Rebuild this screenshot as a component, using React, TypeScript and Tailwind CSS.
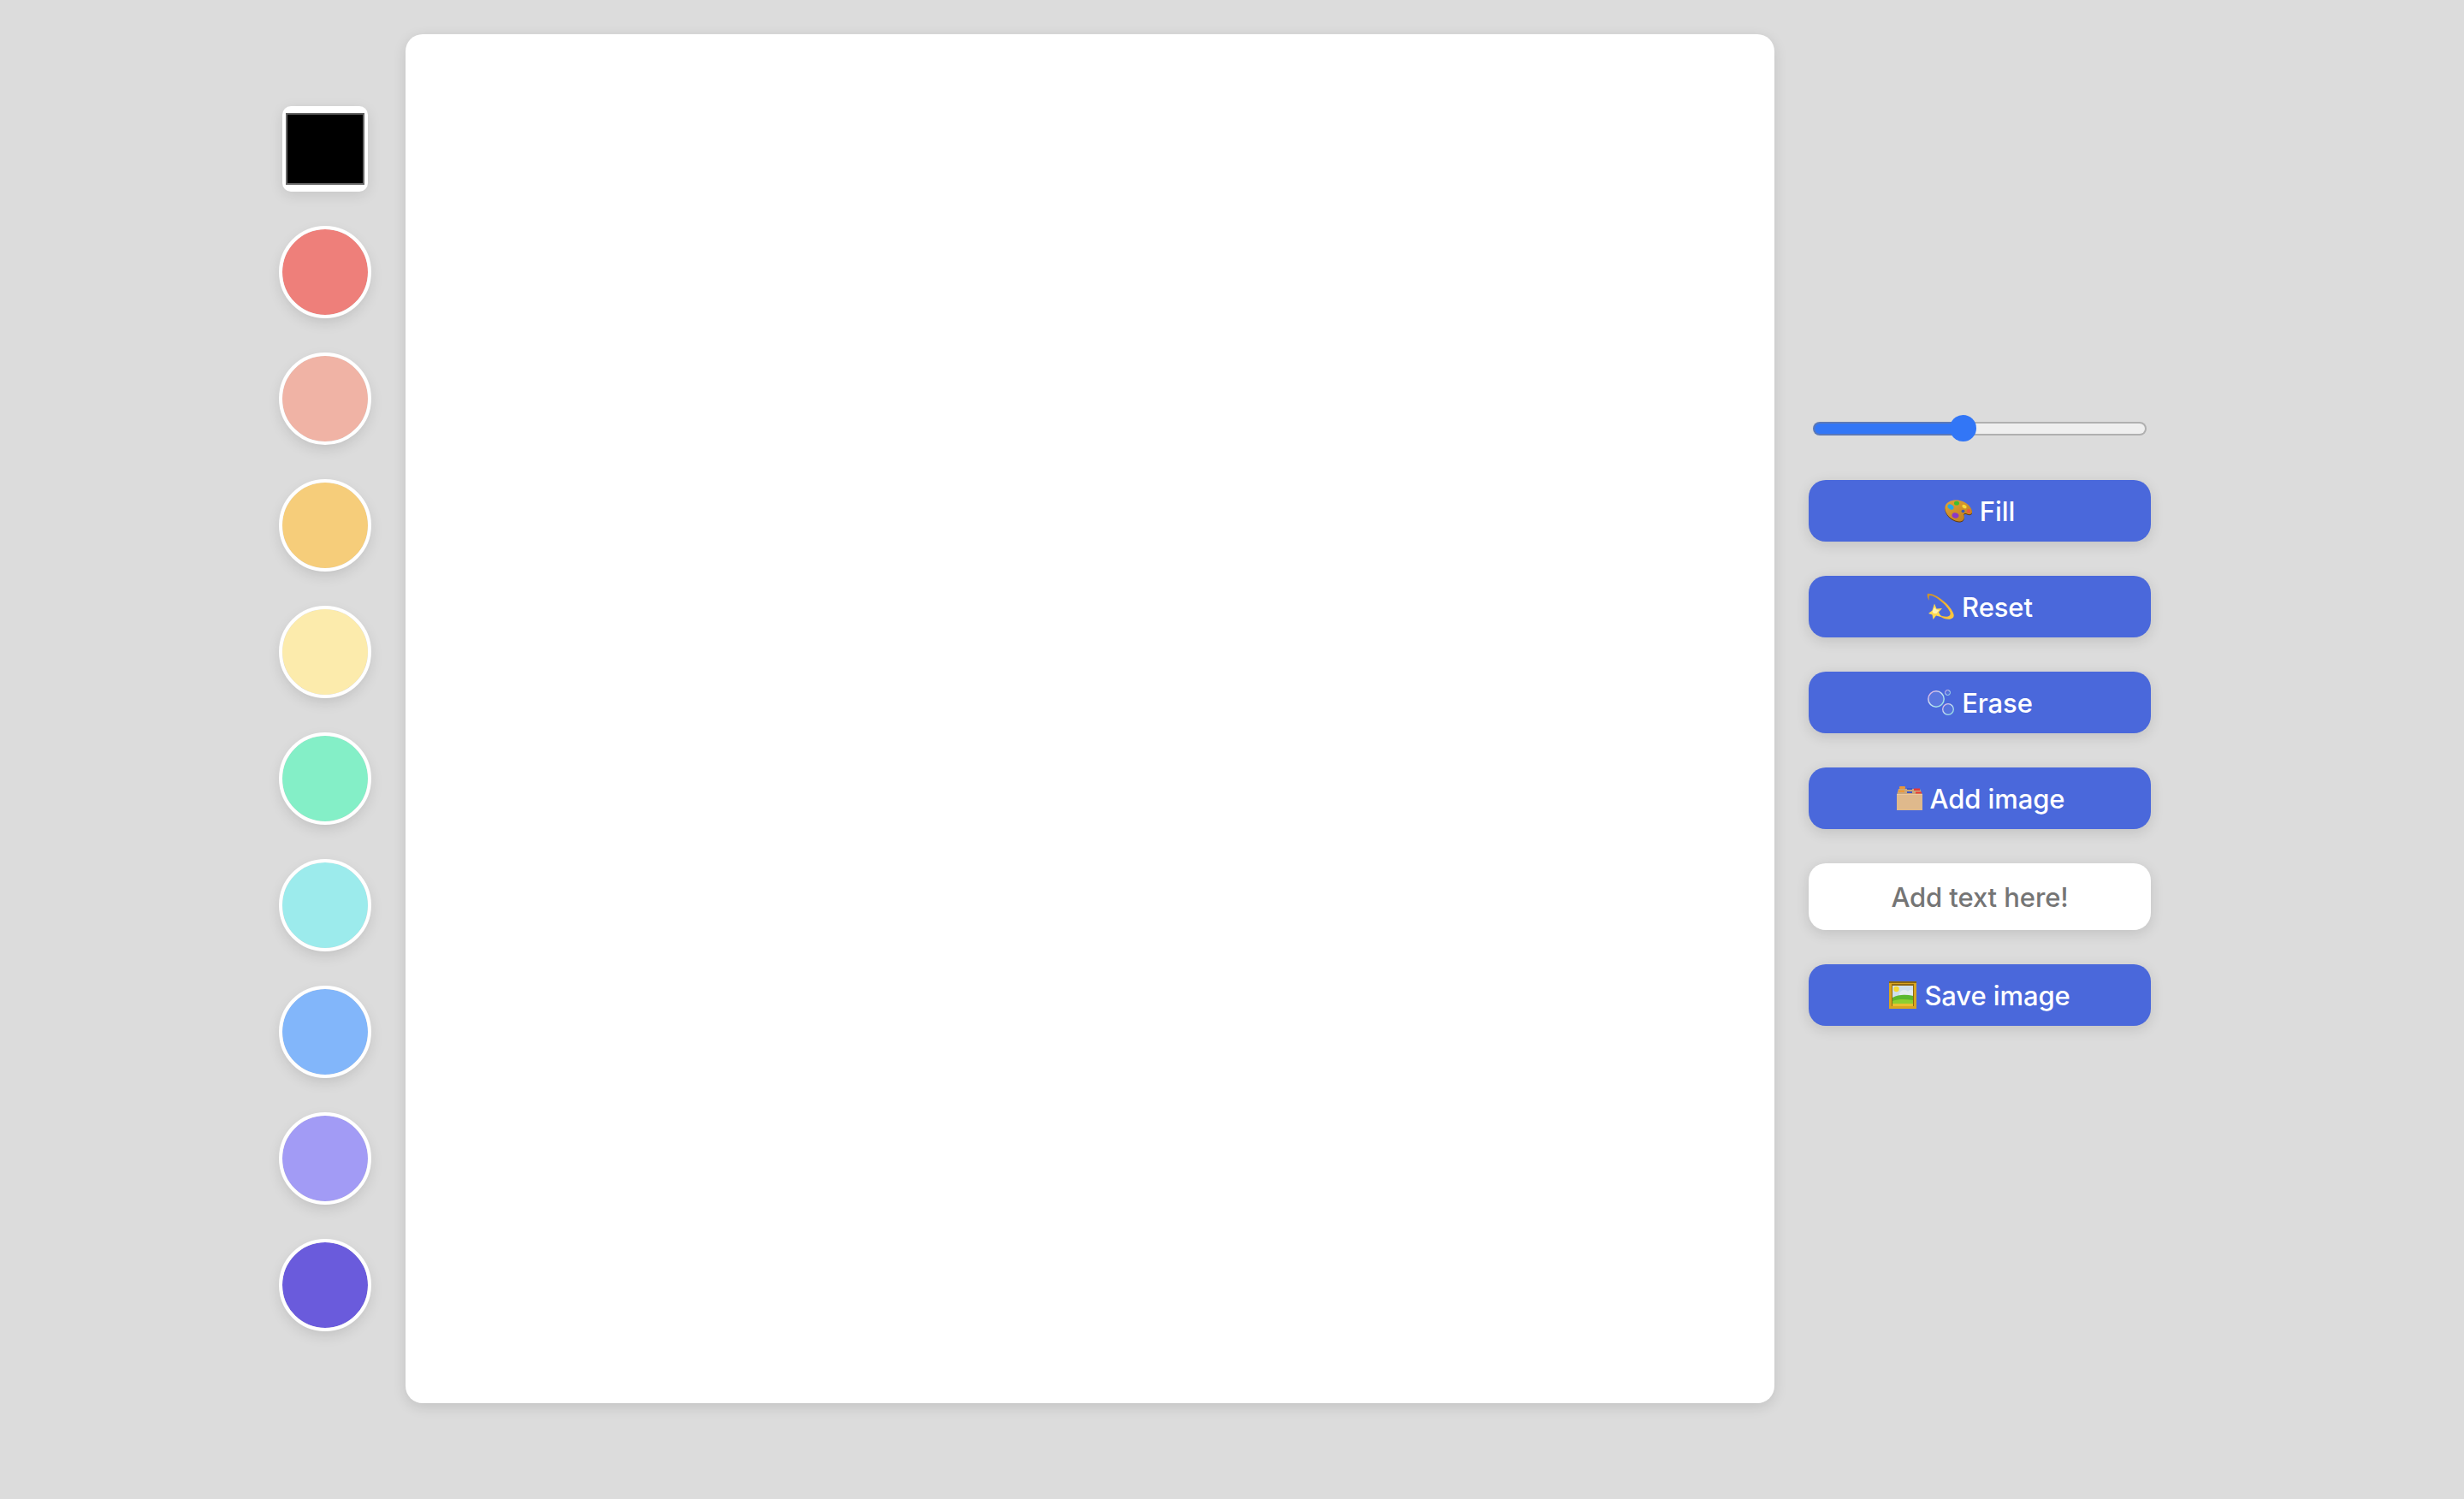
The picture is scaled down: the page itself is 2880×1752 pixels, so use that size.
import React from "react";

const colors = ["#ee7f7a", "#f0b3a5", "#f6cd7a", "#fcebac", "#84efc7", "#9cebec", "#82b6fa", "#a29bf5", "#6a5bdc"];

const Palette = () => (
  <svg viewBox="0 0 32 32" className="w-[32px] h-[32px] block">
    <defs>
      <linearGradient id="pal" x1="0" y1="0" x2="0.7" y2="1">
        <stop offset="0" stopColor="#e3a535" />
        <stop offset="1" stopColor="#bf7f22" />
      </linearGradient>
    </defs>
    <path d="M0.5 11 C2 5 10 2.5 17.5 4 C25 5.5 31.5 11 32 17 C32.3 20 29 21 26 19.5 C23.5 18.5 21.5 19.5 22.5 22 C23.5 25 22 28.5 17 28.5 C9 28.5 -1.5 19 0.5 11Z" fill="#5f3a10" transform="translate(0 1)" />
    <path d="M0.5 11 C2 5 10 2.5 17.5 4 C25 5.5 31.5 11 32 17 C32.3 20 29 21 26 19.5 C23.5 18.5 21.5 19.5 22.5 22 C23.5 25 22 28.5 17 28.5 C9 28.5 -1.5 19 0.5 11Z" fill="url(#pal)" />
    <ellipse cx="7" cy="11.5" rx="3.8" ry="2.8" fill="#2ba6ea" transform="rotate(35 7 11.5)" />
    <ellipse cx="14" cy="7.2" rx="3" ry="2.4" fill="#3fbf2f" />
    <ellipse cx="23" cy="11" rx="2.8" ry="2" fill="#f7d93a" transform="rotate(30 23 11)" />
    <ellipse cx="12.5" cy="21.5" rx="4" ry="3" fill="#8a38c9" transform="rotate(15 12.5 21.5)" />
    <ellipse cx="21.5" cy="16.5" rx="2" ry="1.8" fill="#3a58b8" />
    <ellipse cx="28" cy="16.5" rx="2.2" ry="2.4" fill="#ee5a3a" />
  </svg>
);

const Dizzy = () => (
  <svg viewBox="0 0 32 32" className="w-[32px] h-[32px] block">
    <defs>
      <linearGradient id="diz" x1="0" y1="0" x2="1" y2="1">
        <stop offset="0" stopColor="#c98f2b" />
        <stop offset="0.6" stopColor="#f2b632" />
        <stop offset="1" stopColor="#ffcc40" />
      </linearGradient>
    </defs>
    <path d="M1 1 C8 -1 28 13 31.5 25 C33 31 24 33.5 15 27 L12 24 C21 29.5 28.5 29 27.5 23 C25 15 9 2 3.5 3 C2.5 3.5 2.5 6 3 9 C1 6 0 3 1 1Z" fill="url(#diz)" />
    <path d="M9 12.5 L11.5 18.5 L18 18 L14 22.5 L17 28 L11 26.5 L7.5 31 L6.5 25.5 L2 24 L6.5 20.5 Z" fill="#ffd94f" />
    <path d="M9 17 L11.5 19.5 L14.5 20 L11.5 24 L8 24 L6.5 21.5 Z" fill="#fff3b0" />
  </svg>
);

const Bubbles = () => (
  <svg viewBox="0 0 32 32" className="w-[32px] h-[32px] block" fill="none">
    <defs>
      <linearGradient id="bub" x1="0" y1="0" x2="1" y2="1">
        <stop offset="0" stopColor="#e6a8e0" />
        <stop offset="0.5" stopColor="#c2e4f4" />
        <stop offset="1" stopColor="#8ad8de" />
      </linearGradient>
    </defs>
    <circle cx="11" cy="12" r="9.2" fill="#c9d6f5" fillOpacity="0.14" stroke="url(#bub)" strokeWidth="1.5" />
    <circle cx="24.5" cy="4.5" r="3" fill="#c9d6f5" fillOpacity="0.08" stroke="url(#bub)" strokeWidth="1" />
    <circle cx="25" cy="24" r="6.3" fill="#c9d6f5" fillOpacity="0.1" stroke="url(#bub)" strokeWidth="1.3" />
  </svg>
);

const Cabinet = () => (
  <svg viewBox="0 0 32 32" className="w-[32px] h-[32px] block">
    <path d="M4 5 L29 5 L32 12 L2 12Z" fill="#c9a67c" />
    <rect x="5" y="2" width="7" height="3" rx="1" fill="#e8973a" />
    <rect x="14" y="4" width="6" height="2" fill="#3a58c8" />
    <rect x="22" y="4.5" width="7" height="2.5" fill="#e23a3a" />
    <rect x="4" y="6.5" width="7" height="2.5" fill="#ec9a3a" />
    <rect x="14" y="8" width="6" height="2" fill="#3a58c8" />
    <rect x="24" y="8.5" width="7" height="2" fill="#ee3a30" />
    <rect x="2" y="11" width="30" height="19" fill="#dfb98c" />
    <rect x="2" y="11" width="30" height="1" fill="#ecc89c" />
  </svg>
);

const Framed = () => (
  <svg viewBox="0 0 32 32" className="w-[32px] h-[32px] block">
    <rect x="0" y="0" width="32" height="32" fill="#d9a520" />
    <rect x="0" y="0" width="32" height="2" fill="#8a6510" />
    <rect x="3" y="3" width="26" height="26" fill="#8f6812" />
    <rect x="4" y="5" width="24" height="24" fill="#e8c030" />
    <rect x="4" y="5" width="24" height="21" fill="#cfe0ec" />
    <circle cx="8.5" cy="9" r="3.2" fill="#f6d830" />
    <path d="M12 14 C14 9 20 9 22 12 C24 9 27 10 28 11 L28 16 L12 16Z" fill="#e6ecef" />
    <path d="M4 19 C11 15 20 15 28 17 L28 26 L4 26Z" fill="#5cb82e" />
    <path d="M4 23 C12 20 20 21 28 22 L28 26 L4 26Z" fill="#8ccf30" />
  </svg>
);

function Btn({ icon, label }: { icon: React.ReactNode; label: string }) {
  return (
    <button className="w-[400px] h-[72px] rounded-[20px] bg-[#4a68db] shadow-[0_4px_16px_rgba(0,0,0,0.12)] flex items-center justify-center text-white text-[31px] font-[550] tracking-[-0.1px] leading-none">
      <span className="mr-[9px]">{icon}</span>
      <span className="pt-[1px]">{label}</span>
    </button>
  );
}

export default function App() {
  return (
    <div className="w-[2880px] h-[1752px] bg-[#dcdcdc] pt-[40px] pl-[330px] flex items-start font-['Inter',sans-serif]">
      <div className="h-[1596px] w-[100px] flex flex-col items-center justify-center">
        <div className="w-[100px] h-[100px] bg-white rounded-[10px] px-[4px] py-[8px] shadow-[0_4px_16px_rgba(0,0,0,0.1)] mb-[44px]">
          <div className="w-full h-full bg-black border-2 border-[#666666]" />
        </div>
        <div className="flex flex-col gap-[48px]">
          {colors.map((c) => (
            <div
              key={c}
              className="w-[100px] h-[100px] rounded-full outline-4 outline-white shadow-[0_6px_18px_rgba(0,0,0,0.16)]"
              style={{ backgroundColor: c }}
            />
          ))}
        </div>
      </div>

      <div className="w-[1600px] h-[1600px] ml-[44px] bg-white rounded-[20px] shadow-[0_4px_16px_rgba(0,0,0,0.12)]" />

      <div className="h-[1600px] w-[400px] ml-[40px] flex flex-col items-center justify-center gap-[40px]">
        <div className="w-[400px] h-[40px] px-[5px] flex items-center">
          <div className="w-full h-[16px] flex items-center relative">
            <div className="w-[180px] h-[16px] rounded-l-full bg-[#3276f6] border-2 border-r-0 border-[#5a78b8]" />
            <div className="flex-1 h-[16px] rounded-r-full bg-[#efefef] border-2 border-l-0 border-[#b0b0b0]" />
            <div className="absolute left-[160px] top-[-8px] w-[31px] h-[31px] rounded-full bg-[#3276f6]" />
          </div>
        </div>
        <Btn icon={<Palette />} label="Fill" />
        <Btn icon={<Dizzy />} label="Reset" />
        <Btn icon={<Bubbles />} label="Erase" />
        <Btn icon={<Cabinet />} label="Add image" />
        <input
          placeholder="Add text here!"
          className="w-[400px] h-[78px] rounded-[20px] bg-white shadow-[0_4px_16px_rgba(0,0,0,0.12)] text-center text-[31px] font-[550] tracking-[-0.1px] placeholder:text-[#757575] outline-none"
        />
        <Btn icon={<Framed />} label="Save image" />
      </div>
    </div>
  );
}
